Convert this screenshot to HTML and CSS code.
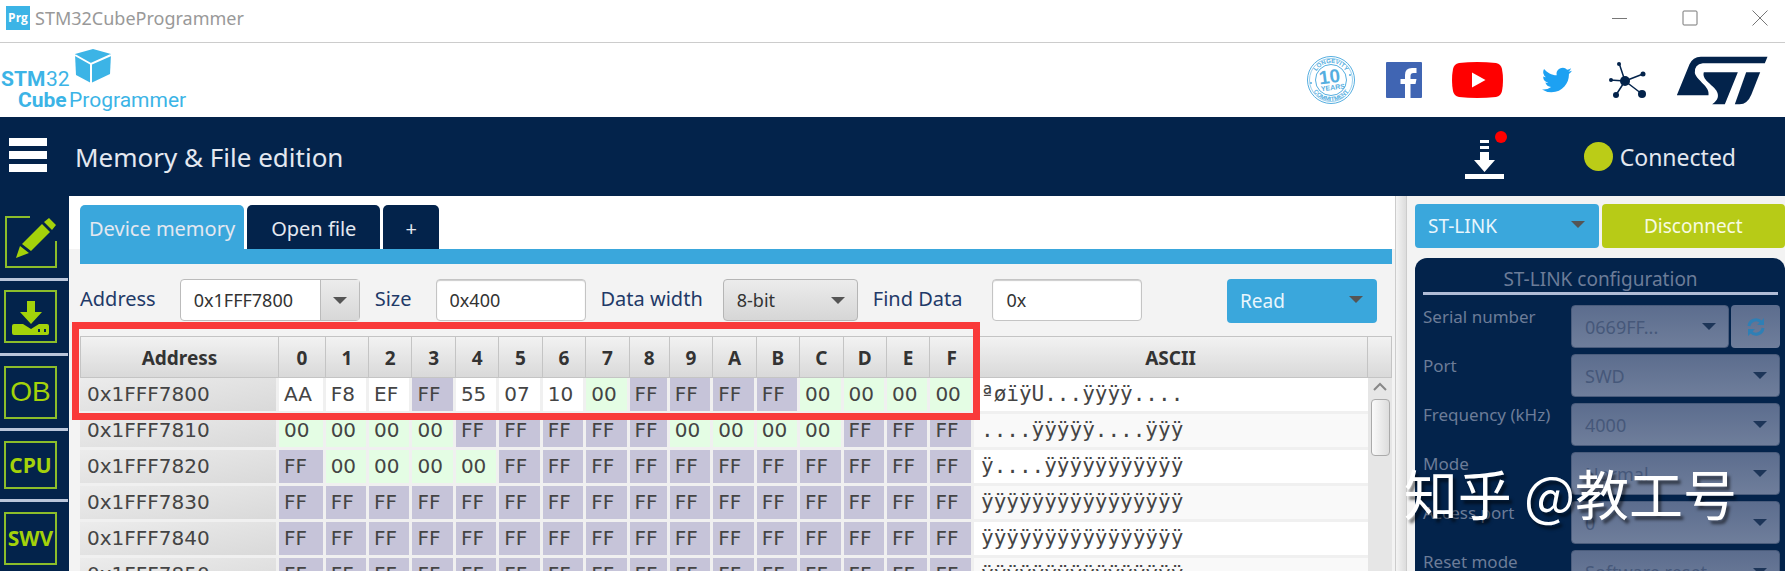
FILE: index.html
```html
<!DOCTYPE html>
<html lang="en">
<head>
    <meta charset="UTF-8">
    <meta name="viewport" content="width=device-width, initial-scale=1.0">
    <title>STM32CubeProgrammer</title>
    <link rel="stylesheet" href="styles.css">
</head>
<body>
    <div class="titlebar">
        <span class="app-icon">Prg</span>
        <span class="app-title">STM32CubeProgrammer</span>
        <div class="window-buttons">
            <button aria-label="Minimize"><svg width="16" height="16" viewBox="0 0 16 16"><path d="M0 8.500H15"/></svg></button>
            <button aria-label="Maximize"><svg width="16" height="16" viewBox="0 0 16 16"><rect x="1" y="1" width="14" height="14" rx="1"/></svg></button>
            <button aria-label="Close"><svg width="16" height="16" viewBox="0 0 16 16"><path d="M0.500 0.500L15.500 15.500M15.500 0.500L0.500 15.500"/></svg></button>
        </div>
    </div>

    <header class="brand">
        <svg class="logo" width="196" height="64" viewBox="0 0 196 64">
            <g fill="#3cb4e6">
                <path d="M75 6L93 1L111 6L110 26L91 35L76 27Z"/>
                <text x="1" y="38" class="logo-bold">STM</text>
                <text x="46" y="38" class="logo-text">32</text>
                <text x="18" y="59" class="logo-bold">Cube</text>
                <text x="69" y="59" class="logo-text">Programmer</text>
            </g>
            <path d="M75 7L91 16L111 7M91 16V35" fill="none" stroke="#fff" stroke-width="2"/>
        </svg>
        <nav class="links">
            <a href="#" aria-label="10 years longevity commitment">
                <svg width="50" height="50" viewBox="0 0 50 50" fill="none" stroke="#55aee0">
                    <defs>
                        <path id="arc-top" d="M8 25A17 17 0 0 1 42 25"/>
                        <path id="arc-bottom" d="M4 25A21 21 0 0 0 46 25"/>
                    </defs>
                    <circle cx="25" cy="25" r="23.500"/>
                    <circle cx="25" cy="25" r="21.500" stroke-width="0.600"/>
                    <circle cx="25" cy="25" r="15.500"/>
                    <g class="stamp">
                        <text font-size="6"><textPath href="#arc-top" startOffset="50%" text-anchor="middle">LONGEVITY</textPath></text>
                        <text font-size="6"><textPath href="#arc-bottom" startOffset="50%" text-anchor="middle">COMMITMENT</textPath></text>
                        <text x="24" y="28" font-size="19" text-anchor="middle" transform="rotate(-7 25 25)">10</text>
                        <text x="26" y="35" font-size="7" text-anchor="middle" transform="rotate(-7 25 25)">YEARS</text>
                        <circle cx="5" cy="28" r="1"/>
                        <circle cx="44" cy="20" r="1"/>
                    </g>
                </svg>
            </a>
            <a href="#" aria-label="Facebook">
                <svg width="36" height="36" viewBox="0 0 36 36"><rect width="36" height="36" rx="1" fill="#4065b3"/><path d="M19 36V22H14.500V17H19V13Q19 6 26 6H30.500V11H27.500Q24.500 11 24.500 14V17H30.500L29.500 22H24.500V36Z" fill="#fff"/></svg>
            </a>
            <a href="#" aria-label="YouTube">
                <svg width="51" height="36" viewBox="0 0 51 36"><path d="M7 1Q25 -1 44 1Q49 2 50 7Q52 18 50 29Q49 34 44 35Q25 37 7 35Q2 34 1 29Q-1 18 1 7Q2 2 7 1Z" fill="#f00"/><path d="M20 10.500L33.500 18L20 25.500Z" fill="#fff"/></svg>
            </a>
            <a href="#" class="twitter" aria-label="Twitter">
                <svg width="30" height="30" viewBox="0 0 24 24"><path fill="#1da1f2" d="M23.950 4.570a10 10 0 0 1-2.820.770 4.960 4.960 0 0 0 2.160-2.720 9.900 9.900 0 0 1-3.120 1.180 4.920 4.920 0 0 0-8.380 4.480C7.690 8.090 4.070 6.130 1.640 3.160a4.920 4.920 0 0 0 1.520 6.570 4.900 4.900 0 0 1-2.230-.610v.060a4.920 4.920 0 0 0 3.950 4.830 5 5 0 0 1-2.210.080 4.940 4.940 0 0 0 4.600 3.420A9.870 9.870 0 0 1 0 19.540a13.990 13.990 0 0 0 7.550 2.210c9.050 0 14-7.500 14-13.980 0-.210 0-.420-.020-.630a9.940 9.940 0 0 0 2.460-2.550z"/></svg>
            </a>
            <a href="#" aria-label="Community">
                <svg width="38" height="38" viewBox="0 0 38 38" fill="#03234b"><path d="M17 20L11 2M17 20L35 13M17 20L2 19M17 20L8 34M17 20L34 33" stroke="#03234b" stroke-width="1.500"/><circle cx="17" cy="20" r="5"/><circle cx="11" cy="3" r="2"/><circle cx="35" cy="13" r="2.500"/><circle cx="3" cy="19" r="2"/><circle cx="8" cy="34" r="3"/><circle cx="34" cy="33" r="4"/></svg>
            </a>
            <a href="#" aria-label="ST">
                <svg width="92" height="49" viewBox="1160 165 275 147" fill="#03234b"><path d="M1162 283L1200 190Q1210 167 1234 167H1434L1426 187H1240Q1214 190 1216 216C1222 240 1262 255 1257 283Z"/><path d="M1243 214H1345L1306 310H1268C1286 298 1290 284 1280 268C1268 250 1236 236 1243 214Z"/><path d="M1370 214H1412L1386 280Q1374 310 1350 310H1336Z"/></svg>
            </a>
        </nav>
    </header>

    <div class="topbar">
        <button class="menu" aria-label="Menu"><span></span><span></span><span></span></button>
        <h1>Memory &amp; File edition</h1>
        <button class="updates" aria-label="Updates">
            <svg width="44" height="50" viewBox="0 0 44 50" fill="#fff"><path d="M16 10H25V13H16ZM16 16H25V19H16ZM16 22H25V30H31L20.500 42L10 30H16ZM1 44H40V49H1Z"/><circle cx="37" cy="7" r="6" fill="#f00"/></svg>
        </button>
        <div class="status"><span class="dot"></span>Connected</div>
    </div>

    <div class="layout">
        <nav class="sidebar">
            <button aria-label="Memory and file edition">
                <svg width="54" height="54" viewBox="0 0 54 54"><path d="M26 2H2V52H52V26" class="frame"/><path d="M40 7L45 3L52 10L48 15ZM38 9L46 17L27 36L18 29ZM16 31L25 38L12 43Z" fill="#a4d20a"/></svg>
            </button>
            <button aria-label="Erasing and programming">
                <svg width="54" height="54" viewBox="0 0 54 54"><rect x="1" y="1" width="51" height="51" class="frame"/><path fill="#a4d20a" d="M23 11H31V22H38L27 34L16 22H23ZM10 34H19L27 39L35 34H43Q45 34 45 36V43Q45 45 43 45H10Q8 45 8 43V36Q8 34 10 34Z"/><path fill="#03234b" d="M34 39H36V42H34ZM40 39H42V42H40Z"/></svg>
            </button>
            <button class="boxed"><span class="box ob">OB</span></button>
            <button class="boxed"><span class="box cpu">CPU</span></button>
            <button class="boxed"><span class="box">SWV</span></button>
        </nav>

        <main class="content">
            <div class="tabs" role="tablist">
                <button class="tab active" role="tab">Device memory</button>
                <button class="tab" role="tab">Open file</button>
                <button class="tab add" role="tab">+</button>
            </div>
            <form class="toolbar">
                <label for="address">Address</label>
                <div class="combo">
                    <input type="text" id="address" value="0x1FFF7800">
                    <button type="button" aria-label="Show addresses"></button>
                </div>
                <label for="size">Size</label>
                <input type="text" class="field" id="size" value="0x400">
                <label for="width">Data width</label>
                <div class="select data-width"><select id="width"><option>8-bit</option></select></div>
                <label for="find">Find Data</label>
                <input type="text" class="field" id="find" value="0x">
                <div class="select blue read"><select aria-label="Read"><option>Read</option></select></div>
            </form>
            <div class="memory">
                <table>
                    <thead>
                        <tr>
                            <th class="col-address">Address</th>
                            <th>0</th><th>1</th><th>2</th><th>3</th><th>4</th><th>5</th><th>6</th><th>7</th>
                            <th>8</th><th>9</th><th>A</th><th>B</th><th>C</th><th>D</th><th>E</th><th>F</th>
                            <th class="col-ascii">ASCII</th>
                        </tr>
                    </thead>
                    <tbody id="rows"></tbody>
                </table>
                <div class="scroll">
                    <div class="scroll-head"></div>
                    <svg width="14" height="9" viewBox="0 0 14 9"><path d="M1 8L7 2L13 8" fill="none" stroke="#888" stroke-width="2"/></svg>
                    <div class="thumb"></div>
                </div>
                <div class="highlight"></div>
            </div>
        </main>

        <div class="splitter"></div>

        <aside class="panel">
            <div class="connect">
                <div class="select blue"><select aria-label="Interface"><option>ST-LINK</option></select></div>
                <button class="disconnect">Disconnect</button>
            </div>
            <div class="config">
                <h2>ST-LINK configuration</h2>
                <div class="row">
                    <label for="serial">Serial number</label>
                    <div class="select"><select id="serial" disabled><option>0669FF...</option></select></div>
                    <button class="refresh" aria-label="Refresh" disabled>
                        <svg width="20" height="20" viewBox="0 0 20 20"><path d="M3 9A7 7 0 0 1 15 5M17 11A7 7 0 0 1 5 15" fill="none" stroke="#2f7fb5" stroke-width="3"/><path d="M18 1V8H11ZM2 19V12H9Z" fill="#2f7fb5"/></svg>
                    </button>
                </div>
                <div class="row">
                    <label for="port">Port</label>
                    <div class="select"><select id="port" disabled><option>SWD</option></select></div>
                </div>
                <div class="row">
                    <label for="frequency">Frequency (kHz)</label>
                    <div class="select"><select id="frequency" disabled><option>4000</option></select></div>
                </div>
                <div class="row">
                    <label for="mode">Mode</label>
                    <div class="select"><select id="mode" disabled><option>Normal</option></select></div>
                </div>
                <div class="row">
                    <label for="access">Access port</label>
                    <div class="select"><select id="access" disabled><option>0</option></select></div>
                </div>
                <div class="row">
                    <label for="reset">Reset mode</label>
                    <div class="select"><select id="reset" disabled><option>Software reset</option></select></div>
                </div>
            </div>
        </aside>
    </div>

    <div class="watermark" lang="zh">知乎 @教工号</div>

    <script>
        const memory = [
            ['0x1FFF7800', 'AA F8 EF FF 55 07 10 00 FF FF FF FF 00 00 00 00', 'ªøïÿU...ÿÿÿÿ....'],
            ['0x1FFF7810', '00 00 00 00 FF FF FF FF FF 00 00 00 00 FF FF FF', '....ÿÿÿÿÿ....ÿÿÿ'],
            ['0x1FFF7820', 'FF 00 00 00 00 FF FF FF FF FF FF FF FF FF FF FF', 'ÿ....ÿÿÿÿÿÿÿÿÿÿÿ'],
            ['0x1FFF7830', 'FF FF FF FF FF FF FF FF FF FF FF FF FF FF FF FF', 'ÿÿÿÿÿÿÿÿÿÿÿÿÿÿÿÿ'],
            ['0x1FFF7840', 'FF FF FF FF FF FF FF FF FF FF FF FF FF FF FF FF', 'ÿÿÿÿÿÿÿÿÿÿÿÿÿÿÿÿ'],
            ['0x1FFF7850', 'FF FF FF FF FF FF FF FF FF FF FF FF FF FF FF FF', 'ÿÿÿÿÿÿÿÿÿÿÿÿÿÿÿÿ']
        ];

        const rows = document.querySelector('#rows');

        memory.forEach(function (line) {
            const tr = document.createElement('tr');

            const address = document.createElement('td');
            address.className = 'address';
            address.innerText = line[0];
            tr.appendChild(address);

            line[1].split(' ').forEach(function (value) {
                const td = document.createElement('td');
                td.innerText = value;
                if (value === 'FF') {
                    td.className = 'erased';
                } else if (value === '00') {
                    td.className = 'zero';
                }
                tr.appendChild(td);
            });

            const ascii = document.createElement('td');
            ascii.className = 'ascii';
            ascii.innerText = line[2];
            tr.appendChild(ascii);

            rows.appendChild(tr);
        });
    </script>
</body>
</html>
```

FILE: styles.css
```css
* {
    box-sizing: border-box;
}

body {
    margin: 0;
    height: 100vh;
    overflow: hidden;
    display: flex;
    flex-direction: column;
    background-color: #f3f3f3;
    color: #333;
    font-family: "Noto Sans", "Open Sans", sans-serif;
    font-size: 19px;
}

button, input, select {
    font: inherit;
    color: inherit;
    margin: 0;
    padding: 0;
    border: 0;
    background: none;
}

/* window title */
.titlebar {
    flex: none;
    height: 43px;
    padding: 0 17px 6px 6px;
    display: flex;
    align-items: center;
    gap: 5px;
    background-color: #fff;
    border-bottom: 1px solid #ccc;
}

.app-icon {
    width: 24px;
    height: 24px;
    background-color: #3cb4e6;
    color: #fff;
    font: bold 12px/24px "Open Sans", sans-serif;
    text-align: center;
}

.app-title {
    color: #999;
    font-size: 18px;
}

.window-buttons {
    margin-left: auto;
    display: flex;
    gap: 54px;
}

.window-buttons button {
    display: flex;
}

.window-buttons svg {
    fill: none;
    stroke: #777;
}

.brand {
    flex: none;
    height: 74px;
    padding: 0 17px 0 0;
    display: flex;
    align-items: center;
    justify-content: space-between;
    background-color: #fff;
}

.logo-bold {
    font: bold 21px Roboto, sans-serif;
}

.logo-text {
    font: 21px Roboto, sans-serif;
}

.links {
    display: flex;
    align-items: center;
    gap: 30px;
}

.links a {
    display: flex;
}

.links .twitter {
    margin: 0 6px 0 9px;
}

.stamp {
    fill: #55aee0;
    stroke: none;
    font-family: "Liberation Sans", sans-serif;
    font-weight: bold;
}

.topbar {
    flex: none;
    height: 79px;
    padding: 0 49px 0 9px;
    display: flex;
    align-items: center;
    background-color: #03234b;
    color: #e4e8f0;
}

.menu {
    width: 38px;
    display: flex;
    flex-direction: column;
    gap: 5px;
    padding-bottom: 4px;
}

.menu span {
    height: 8px;
    background-color: #fff;
}

h1 {
    margin: 0 auto 0 28px;
    font-size: 26px;
    font-weight: normal;
}

.updates {
    display: flex;
    margin-right: 76px;
    padding-bottom: 4px;
}

.status {
    display: flex;
    align-items: center;
    gap: 7px;
    font-size: 23px;
}

.dot {
    width: 29px;
    height: 29px;
    border-radius: 50%;
    background-color: #bbcc17;
}

.layout {
    flex: 1;
    min-height: 0;
    display: flex;
}

/* left icons */
.sidebar {
    flex: none;
    width: 69px;
    padding-top: 10px;
    background-color: #03234b;
}

.sidebar button {
    width: 68px;
    height: 75px;
    padding-left: 4px;
    display: flex;
    align-items: center;
    border-bottom: 3px solid #b9c5da;
}

.frame {
    fill: none;
    stroke: #8cbd2a;
    stroke-width: 2;
}

.sidebar .box {
    width: 53px;
    height: 53px;
    display: flex;
    align-items: center;
    justify-content: center;
    border: 2px solid #8cbd2a;
    color: #a4d20a;
    font: bold 21px "Open Sans", sans-serif;
}

.sidebar .ob {
    font: 28px "Liberation Sans", sans-serif;
}

.sidebar .cpu {
    height: 48px;
}

.sidebar .boxed:nth-child(4) {
    height: 71px;
}

/* memory view */
.content {
    flex: 1;
    min-width: 0;
    padding: 0 3px 0 11px;
}

.tabs {
    margin-left: -11px;
    margin-right: -3px;
    padding: 9px 0 0 11px;
    height: 53px;
    display: flex;
    gap: 3px;
    background-color: #fff;
}

.tab {
    height: 44px;
    padding: 2px 24px 0;
    border-radius: 5px 5px 0 0;
    background-color: #03234b;
    color: #e4e8f0;
    font-size: 20px;
}

.tab.active {
    padding: 2px 9px 0;
    background-color: #3aa7dc;
}

.tab.add {
    padding: 2px 22px 0;
}

.toolbar {
    height: 87px;
    padding: 15px 15px 0 0;
    display: flex;
    align-items: flex-start;
    gap: 15px;
    border-top: 15px solid #3aa7dc;
}

.toolbar label {
    line-height: 40px;
    color: #1f3a68;
    font-size: 20px;
}

.combo {
    width: 180px;
    height: 42px;
    margin-left: 9px;
    display: flex;
    border: 1px solid #bbb;
    border-radius: 4px;
    background-color: #fff;
}

.combo input {
    flex: 1;
    min-width: 0;
    padding-left: 13px;
    font-size: 18px;
}

.combo button {
    position: relative;
    width: 39px;
    border-left: 1px solid #bbb;
    background: linear-gradient(#ececec, #d8d8d8);
}

.field {
    width: 150px;
    height: 42px;
    margin-left: 9px;
    padding-left: 13px;
    border: 1px solid #c4c4c4;
    border-radius: 4px;
    background-color: #fff;
    box-shadow: inset 0 1px 1px #ccc;
    font-size: 18px;
}

.toolbar #find {
    margin-left: 15px;
}

.select {
    position: relative;
    height: 42px;
    border: 1px solid #b5b5b5;
    border-radius: 4px;
    background: linear-gradient(#ececec, #d6d6d6);
}

.select select {
    width: 100%;
    height: 100%;
    padding-left: 13px;
    appearance: none;
    opacity: 1;
    font-size: 18px;
}

.select::after,
.combo button::after {
    content: "";
    position: absolute;
    top: 17px;
    right: 12px;
    border: 7px solid transparent;
    border-top-color: #555;
    border-bottom: 0;
}

.data-width {
    width: 135px;
    margin-left: 5px;
}

.select.blue {
    height: 44px;
    border: 0;
    background: #3aa7dc;
    color: #e9f6fd;
}

.select.blue select {
    font-size: 19px;
}

.select.blue::after {
    right: 14px;
}

.read {
    width: 150px;
    margin-left: auto;
}

.memory {
    position: relative;
    display: flex;
    background-color: #eee;
}

table {
    flex: 1;
    table-layout: fixed;
    border-collapse: separate;
    border-spacing: 0;
}

th {
    height: 42px;
    padding: 2px 0 0;
    border: 1px solid #c4c4c4;
    border-left: 0;
    background: linear-gradient(#f2f2f2, #d9d9d9);
    font-size: 19px;
}

.col-address {
    width: 199px;
    border-left: 1px solid #c4c4c4;
}

.col-ascii {
    width: 394px;
}

td {
    height: 36px;
    padding: 0 0 0 5px;
    border-right: 3px solid #f0f0f0;
    border-bottom: 3px solid #f0f0f0;
    background-color: #fff;
    font: 20px/33px "DejaVu Sans", sans-serif;
    color: #444;
}

.address {
    padding-left: 7px;
    background: linear-gradient(170deg, #ececec, #d9d9d9);
}

.erased {
    background-color: #c6c4d9;
}

.zero {
    background-color: #e4fde4;
}

.ascii {
    padding-left: 7px;
    border-right: 0;
    font-family: "DejaVu Sans Mono", monospace;
    font-size: 21px;
}

tr:nth-child(even) .ascii {
    background-color: #f9f9f9;
}

.scroll {
    width: 24px;
    display: flex;
    flex-direction: column;
    align-items: center;
    gap: 4px;
    background-color: #e6e6e6;
}

.scroll-head {
    width: 100%;
    height: 42px;
    border: 1px solid #c4c4c4;
    border-left: 0;
    background: linear-gradient(#f2f2f2, #d9d9d9);
}

.thumb {
    width: 19px;
    height: 57px;
    margin-top: 4px;
    border: 1px solid #aaa;
    border-radius: 4px;
    background: linear-gradient(90deg, #fafafa, #ddd);
}

.highlight {
    position: absolute;
    left: -8px;
    top: -14px;
    width: 908px;
    height: 98px;
    border: 7px solid #f93a3a;
}

.splitter {
    flex: none;
    width: 12px;
    border: 1px solid #ccc;
    border-width: 0 1px;
    background: linear-gradient(90deg, #f4f4f4, #dcdcdc);
}

/* connection panel */
.panel {
    flex: none;
    width: 378px;
    padding: 8px 0 0 8px;
}

.connect {
    display: grid;
    grid-template-columns: 1fr 1fr;
    gap: 3px;
    margin-bottom: 10px;
}

.disconnect {
    border-radius: 4px;
    background-color: #b7cb17;
    color: #f8fbe0;
}

.config {
    padding: 9px 5px 0 8px;
    border-radius: 12px 12px 0 0;
    background-color: #03234b;
    color: #6c7c98;
}

h2 {
    margin: 0 2px 10px 0;
    border-bottom: 3px solid #b0bcd6;
    font-size: 19px;
    line-height: 25px;
    font-weight: normal;
    text-align: center;
}

.row {
    display: flex;
    gap: 2px;
    margin-bottom: 6px;
}

.row label {
    width: 146px;
    font-size: 17px;
    line-height: 24px;
}

.row .select {
    flex: 1;
    height: 43px;
    border-color: #4a5c7c;
    background: linear-gradient(#5c6d8e, #6f7e9b);
    color: #46587a;
}

.row .select::after {
    border-top-color: #1d3558;
}

.refresh {
    width: 49px;
    display: flex;
    align-items: center;
    justify-content: center;
    border-radius: 4px;
    background: linear-gradient(#5c6d8e, #6f7e9b);
}

.watermark {
    position: absolute;
    right: 48px;
    bottom: 38px;
    color: #fff;
    font: 54px/80px "Noto Sans CJK SC", sans-serif;
    text-shadow: 3px 4px 3px rgba(0, 0, 0, 0.5);
}
```
